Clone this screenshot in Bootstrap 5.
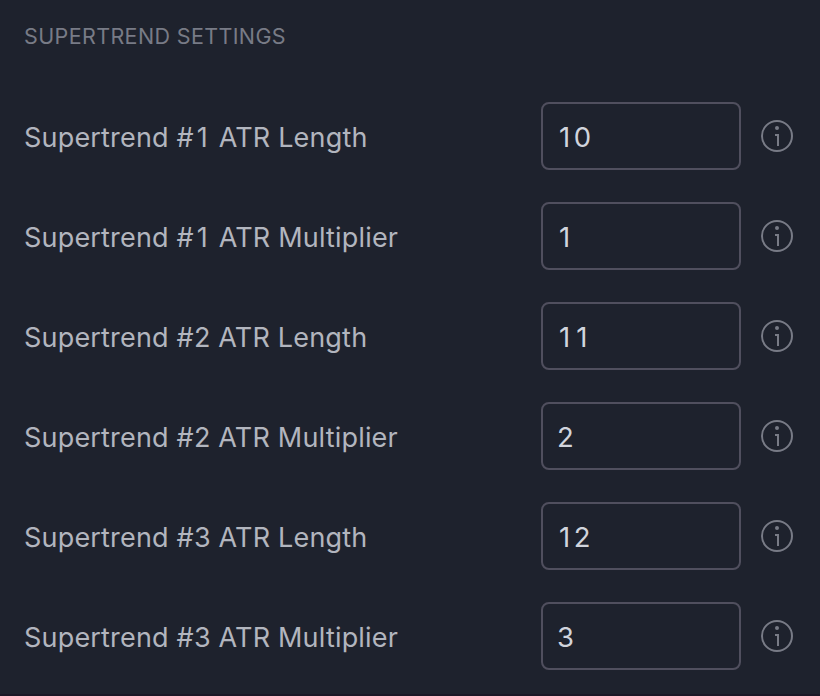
<!DOCTYPE html>
<html lang="en">
<head>
<meta charset="utf-8">
<meta name="viewport" content="width=device-width, initial-scale=1">
<title>Supertrend settings</title>
<link rel="stylesheet" href="https://cdn.jsdelivr.net/npm/bootstrap@5.3.0/dist/css/bootstrap.min.css">
<style>
  body { background:#1e222d; color:#b2b5be; font-family:Inter,sans-serif; height:696px; overflow:hidden; }
  .panel { height:694px; padding:22px 27px 0 24px; }
  .section-title { font-size:21.5px; line-height:28px; letter-spacing:.37px; color:#787b86; font-weight:400; margin-bottom:36px; }
  .setting { height:100px; }
  .setting label { font-size:27px; line-height:36px; letter-spacing:.19px; padding-top:4px; }
  .narrow-digit { padding:0 2.9px; }
  .setting .form-control { width:200px; height:68px; background:#1e222d; border:2px solid #504f5e; border-radius:8px; color:#d1d4dc; font-size:27.5px; padding:2px 14px 0; }
  .setting .lead-one { padding-left:16px; letter-spacing:3.5px; }
  .setting .double-one { letter-spacing:6px; }
  .hint { width:32px; height:32px; margin-left:20px; color:#787b86; }
  .edge { height:2px; background:#1b1826; }
</style>
</head>
<body>
<svg class="d-none"><symbol id="info" viewBox="0 0 32 32"><circle cx="16" cy="16" r="15" fill="none" stroke="currentColor" stroke-width="2"/><circle cx="16" cy="8" r="2" fill="currentColor"/><path d="M14 15h3v11" fill="none" stroke="currentColor" stroke-width="2"/></symbol></svg>
<main class="panel">
  <h1 class="section-title">SUPERTREND SETTINGS</h1>
  <div class="setting d-flex align-items-center"><label class="flex-grow-1" for="a">Supertrend #<span class="narrow-digit">1</span> ATR Length</label><input id="a" class="form-control lead-one flex-shrink-0" value="10"><svg class="hint flex-shrink-0"><use href="#info"/></svg></div>
  <div class="setting d-flex align-items-center"><label class="flex-grow-1" for="b">Supertrend #<span class="narrow-digit">1</span> ATR Multiplier</label><input id="b" class="form-control lead-one flex-shrink-0" value="1"><svg class="hint flex-shrink-0"><use href="#info"/></svg></div>
  <div class="setting d-flex align-items-center"><label class="flex-grow-1" for="c">Supertrend #2 ATR Length</label><input id="c" class="form-control lead-one double-one flex-shrink-0" value="11"><svg class="hint flex-shrink-0"><use href="#info"/></svg></div>
  <div class="setting d-flex align-items-center"><label class="flex-grow-1" for="d">Supertrend #2 ATR Multiplier</label><input id="d" class="form-control flex-shrink-0" value="2"><svg class="hint flex-shrink-0"><use href="#info"/></svg></div>
  <div class="setting d-flex align-items-center"><label class="flex-grow-1" for="e">Supertrend #3 ATR Length</label><input id="e" class="form-control lead-one flex-shrink-0" value="12"><svg class="hint flex-shrink-0"><use href="#info"/></svg></div>
  <div class="setting d-flex align-items-center"><label class="flex-grow-1" for="f">Supertrend #3 ATR Multiplier</label><input id="f" class="form-control flex-shrink-0" value="3"><svg class="hint flex-shrink-0"><use href="#info"/></svg></div>
</main>
<div class="edge"></div>
<script src="https://cdn.jsdelivr.net/npm/bootstrap@5.3.0/dist/js/bootstrap.bundle.min.js"></script>
</body>
</html>
